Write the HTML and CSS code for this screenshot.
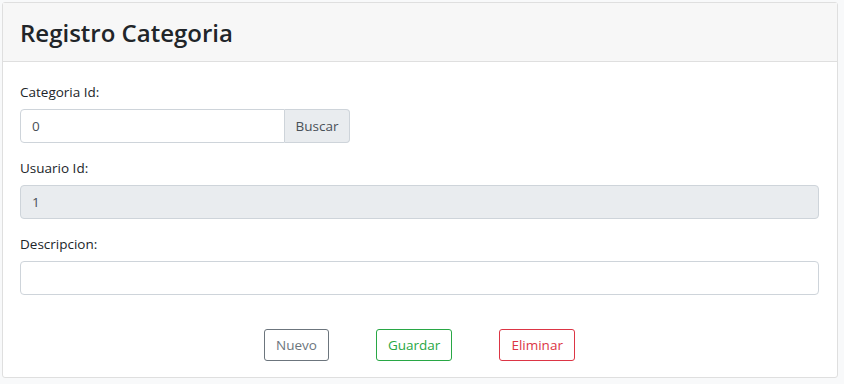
FILE: index.html
```html
<!DOCTYPE html>
<html lang="es">
<head>
    <meta charset="UTF-8">
    <meta name="viewport" content="width=device-width, initial-scale=1.0">
    <title>Registro Categoria</title>
    <link rel="stylesheet" href="styles.css">
</head>
<body>
    <div class="card">
        <div class="card-header">
            <h3>Registro Categoria</h3>
        </div>
        <div class="card-body">
            <div class="form-group">
                <label for="categoriaId">Categoria Id:</label>
                <div class="input-group">
                    <input type="number" id="categoriaId" class="form-control" value="0">
                    <button class="btn-append">Buscar</button>
                </div>
            </div>
            <div class="form-group">
                <label for="usuarioId">Usuario Id:</label>
                <input type="text" id="usuarioId" class="form-control" value="1" readonly>
            </div>
            <div class="form-group">
                <label for="descripcion">Descripcion:</label>
                <input type="text" id="descripcion" class="form-control">
            </div>
            <div class="actions">
                <button class="btn btn-secondary">Nuevo</button>
                <button class="btn btn-success">Guardar</button>
                <button class="btn btn-danger">Eliminar</button>
            </div>
        </div>
    </div>
</body>
</html>
```

FILE: styles.css
```css
body {
    font-family: "Open Sans", "Noto Sans", Arial, sans-serif;
    background: #f8f9fa;
    color: #212529;
    margin: 0;
    padding: 2px 6px 6px 2px;
}
.card {
    background: white;
    border: 1px solid #dfdfdf;
    border-radius: 3px;
}
.card-header {
    background: #f7f7f7;
    border-bottom: 1px solid #dfdfdf;
    padding: 12px 17px 11px;
}
.card-header h3 {
    margin: 0;
    font-size: 24px;
    font-weight: 600;
    line-height: 35px;
}
.card-body {
    padding: 20px 18px 16px 17px;
}
.form-group {
    margin-bottom: 15px;
}
label {
    display: block;
    font-size: 13.5px;
    line-height: 21px;
    margin-bottom: 6px;
}
.form-control {
    display: block;
    box-sizing: border-box;
    width: 100%;
    height: 34px;
    padding: 0 11px;
    font-family: inherit;
    font-size: 13.5px;
    color: #495057;
    background: white;
    border: 1px solid #ced4da;
    border-radius: 4px;
    outline: none;
}
.form-control[readonly] {
    background: #e9ecef;
}
input[type=number]::-webkit-inner-spin-button {
    -webkit-appearance: none;
}
.input-group {
    display: flex;
    width: 330px;
}
.input-group .form-control {
    flex: 1;
    border-radius: 4px 0 0 4px;
}
.btn-append {
    width: 65px;
    height: 34px;
    font-family: inherit;
    font-size: 13.5px;
    color: #495057;
    background: #e9ecef;
    border: 1px solid #ced4da;
    border-left: none;
    border-radius: 0 4px 4px 0;
}
.actions {
    display: flex;
    justify-content: center;
    gap: 47px;
    margin-top: 34px;
}
.btn {
    height: 32px;
    padding: 0 11px;
    font-family: inherit;
    font-size: 13.5px;
    background: white;
    border: 1px solid;
    border-radius: 3px;
    cursor: pointer;
}
.btn-secondary {
    color: #6c757d;
    border-color: #6c757d;
}
.btn-success {
    color: #28a745;
    border-color: #28a745;
}
.btn-danger {
    color: #dc3545;
    border-color: #dc3545;
}
```
